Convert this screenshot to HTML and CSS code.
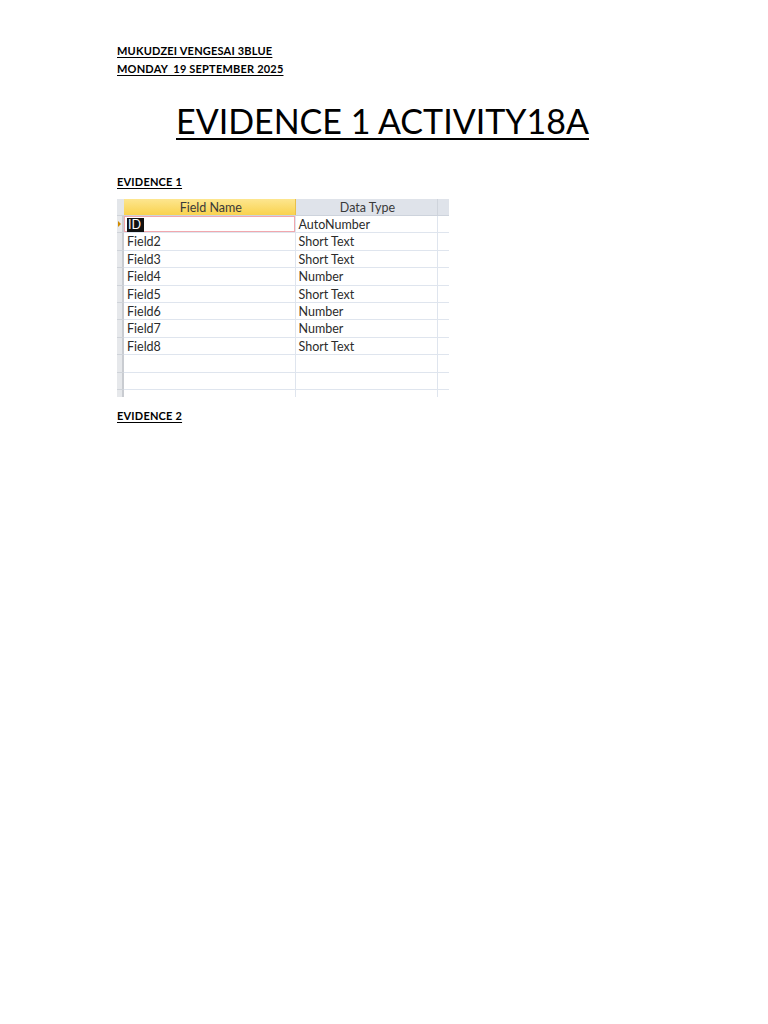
FILE: index.html
```html
<!DOCTYPE html>
<html>
<head>
<meta charset="utf-8">
<link rel="stylesheet" href="styles.css">
</head>
<body>
<div class="page">
  <div class="meta">
    <div class="meta-line">MUKUDZEI VENGESAI 3BLUE</div>
    <div class="meta-line">MONDAY&nbsp; 19 SEPTEMBER 2025</div>
  </div>
  <h1 class="title">EVIDENCE 1 ACTIVITY18A</h1>
  <div class="section">EVIDENCE 1</div>
  <div class="shot">
    <table class="grid">
      <colgroup>
        <col class="c-sel"><col class="c-name"><col class="c-type"><col class="c-desc">
      </colgroup>
      <thead>
        <tr>
          <th class="sel"></th>
          <th class="h-name">Field Name</th>
          <th class="h-type">Data Type</th>
          <th class="h-desc"></th>
        </tr>
      </thead>
      <tbody>
        <tr class="current"><td class="sel"><span class="arrow"></span></td><td class="name active"><span class="hl">ID</span></td><td>AutoNumber</td><td></td></tr>
        <tr><td class="sel"></td><td class="name">Field2</td><td>Short Text</td><td></td></tr>
        <tr><td class="sel"></td><td class="name">Field3</td><td>Short Text</td><td></td></tr>
        <tr><td class="sel"></td><td class="name">Field4</td><td>Number</td><td></td></tr>
        <tr><td class="sel"></td><td class="name">Field5</td><td>Short Text</td><td></td></tr>
        <tr><td class="sel"></td><td class="name">Field6</td><td>Number</td><td></td></tr>
        <tr><td class="sel"></td><td class="name">Field7</td><td>Number</td><td></td></tr>
        <tr><td class="sel"></td><td class="name">Field8</td><td>Short Text</td><td></td></tr>
        <tr><td class="sel"></td><td class="name"></td><td></td><td></td></tr>
        <tr><td class="sel"></td><td class="name"></td><td></td><td></td></tr>
        <tr class="last"><td class="sel"></td><td class="name"></td><td></td><td></td></tr>
      </tbody>
    </table>
  </div>
  <div class="section sec2">EVIDENCE 2</div>
</div>
</body>
</html>
```

FILE: styles.css
```css
html, body {
  margin: 0;
  padding: 0;
  background: #ffffff;
}
.page {
  padding: 42px 0 0 117px;
  font-family: Lato, "Open Sans", sans-serif;
  color: #000;
}
.meta-line {
  font-size: 11px;
  font-weight: 700;
  line-height: 18px;
  letter-spacing: 0.2px;
  text-decoration: underline;
  text-underline-offset: 2px;
  white-space: pre;
}
.title {
  margin: 23px 0 0 59px;
  font-size: 34px;
  font-weight: 400;
  line-height: 40px;
  text-decoration: underline;
  text-decoration-thickness: 2px;
  text-underline-offset: 4px;
}
.section {
  margin-top: 33px;
  font-size: 11px;
  font-weight: 700;
  line-height: 16px;
  letter-spacing: 0.2px;
  text-decoration: underline;
  text-underline-offset: 2px;
}
.shot {
  margin-top: 9px;
  width: 332px;
}
.grid {
  border-collapse: collapse;
  table-layout: fixed;
  width: 332px;
  font-family: Lato, "Open Sans", sans-serif;
  font-size: 12.5px;
  color: #2b2b2b;
}
.c-sel { width: 7px; }
.c-name { width: 171px; }
.c-type { width: 142px; }
.c-desc { width: 12px; }
.grid th, .grid td {
  height: 15.4px;
  padding: 1px 0 0 3px;
  border-bottom: 1px solid #dfe5ee;
  border-right: 1px solid #dfe5ee;
  text-align: left;
  white-space: nowrap;
  overflow: hidden;
  line-height: 15px;
  vertical-align: top;
}
.grid th {
  height: 15px;
  font-weight: 400;
  text-align: center;
  color: #3a3a3a;
  background: #dfe3ea;
  border-right: 1px solid #cfd4dc;
  border-bottom: 1px solid #cdd3dc;
}
.grid th.h-name {
  background: linear-gradient(#fde68f, #f9d24e);
  border-right: 1px solid #e9c04a;
}
.grid th.h-desc, .grid td:last-child {
  border-right: none;
}
.grid .sel {
  padding: 0;
  height: 16.4px;
  background: linear-gradient(90deg, #e6e8eb 0, #e6e8eb 5px, #c9ccd1 5px, #c9ccd1 7px);
  border-right: none;
  border-bottom: 1px solid #cfd3d9;
  position: relative;
}
.grid th.sel {
  height: 16px;
  background: #e3e6ea;
}
.arrow {
  position: absolute;
  left: 1px;
  top: 5px;
  width: 0;
  height: 0;
  border-top: 3px solid transparent;
  border-bottom: 3px solid transparent;
  border-left: 3px solid #d08a00;
}
.grid td.active {
  box-shadow: inset 0 0 0 1px #f1a7ad;
  padding-left: 3px;
}
.hl {
  background: #111;
  color: #fff;
  padding: 0 3px 0 1px;
  display: inline-block;
  line-height: 14px;
}
.grid tr.last td {
  height: 7px;
  padding-top: 0;
  border-bottom: none;
}
.sec2 {
  margin-top: 11px;
}
```
